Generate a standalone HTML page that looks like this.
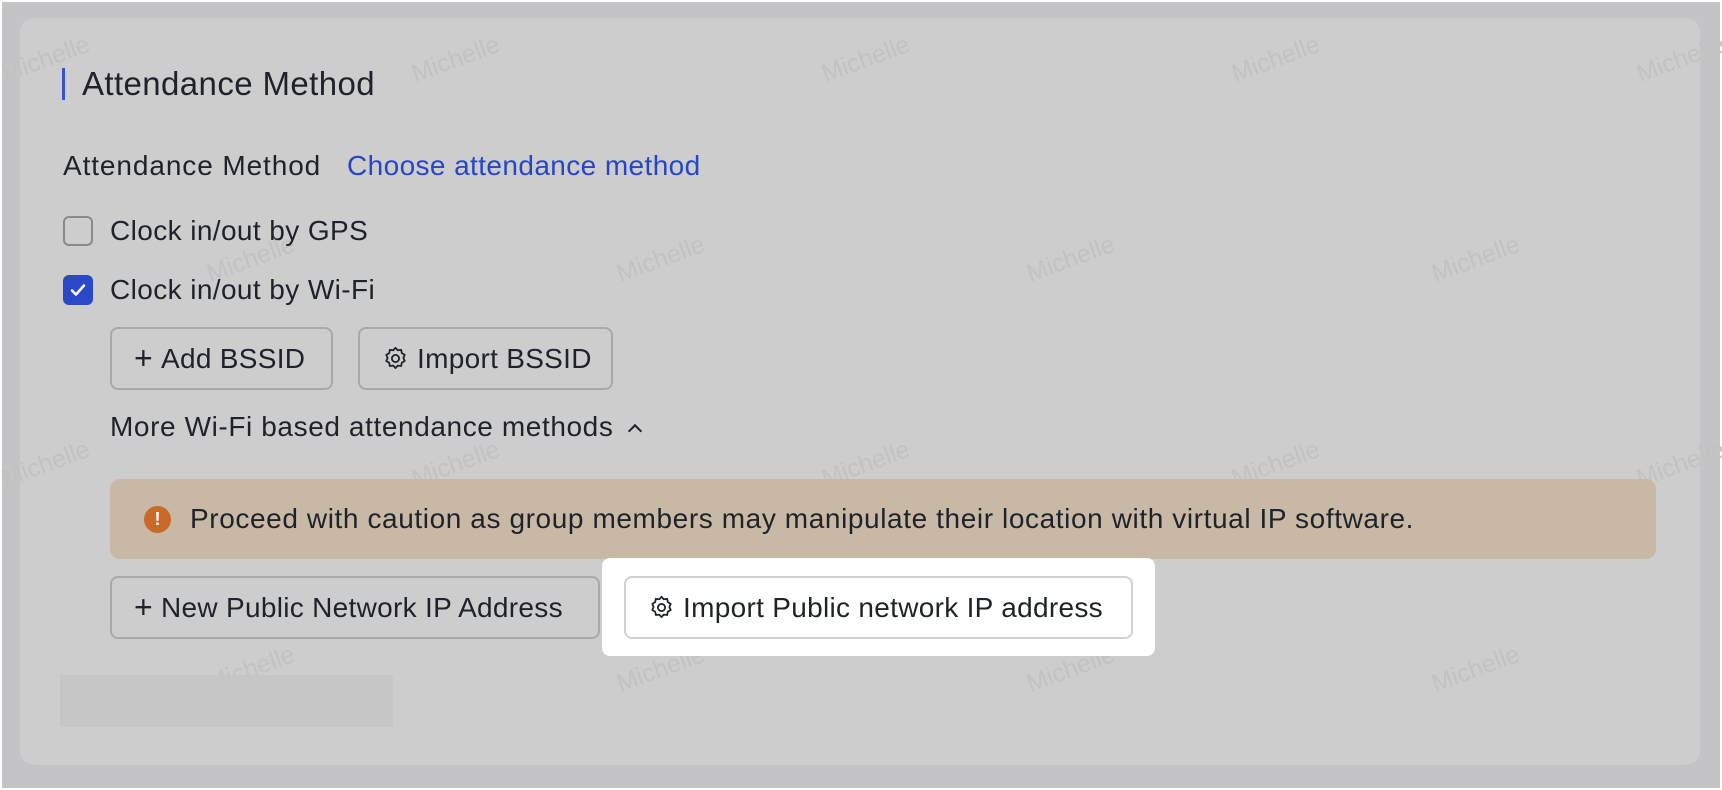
<!DOCTYPE html>
<html><head><meta charset="utf-8"><style>
*{box-sizing:border-box;margin:0;padding:0}
body{width:1722px;height:790px;background:#fff;font-family:"Liberation Sans",sans-serif;color:#1f2329;position:relative;overflow:hidden}
.frame{position:absolute;left:2px;top:2px;width:1718px;height:786px;background:#c4c4c6}
.panel{position:absolute;left:20px;top:18px;width:1680px;height:747px;background:#cdcdcd;border-radius:14px}
.abs{position:absolute}
.t{position:absolute;white-space:nowrap;font-size:28px;line-height:32px;letter-spacing:0.4px}
.btn{position:absolute;border:2px solid #a9a9ab;border-radius:8px;height:63px;font-size:28px;letter-spacing:0.3px;display:flex;align-items:center;padding-left:22px;white-space:nowrap}
.wm{position:absolute;color:#c2c2c2;font-size:25px;transform:rotate(-20deg);white-space:nowrap}
</style></head><body>
<div class="frame"></div>
<div class="panel"></div>
<div class="wm" style="left:0;top:45px">Michelle</div>
<div class="wm" style="left:410px;top:45px">Michelle</div>
<div class="wm" style="left:820px;top:45px">Michelle</div>
<div class="wm" style="left:1230px;top:45px">Michelle</div>
<div class="wm" style="left:1635px;top:45px">Michelle</div>
<div class="wm" style="left:205px;top:245px">Michelle</div>
<div class="wm" style="left:615px;top:245px">Michelle</div>
<div class="wm" style="left:1025px;top:245px">Michelle</div>
<div class="wm" style="left:1430px;top:245px">Michelle</div>
<div class="wm" style="left:0;top:450px">Michelle</div>
<div class="wm" style="left:410px;top:450px">Michelle</div>
<div class="wm" style="left:820px;top:450px">Michelle</div>
<div class="wm" style="left:1230px;top:450px">Michelle</div>
<div class="wm" style="left:1635px;top:450px">Michelle</div>
<div class="wm" style="left:205px;top:655px">Michelle</div>
<div class="wm" style="left:615px;top:655px">Michelle</div>
<div class="wm" style="left:1025px;top:655px">Michelle</div>
<div class="wm" style="left:1430px;top:655px">Michelle</div>

<div class="abs" style="left:62px;top:68px;width:3px;height:32px;background:#3355cc"></div>
<div class="t" style="left:82px;top:65px;font-size:33px;line-height:38px">Attendance Method</div>
<div class="t" style="left:63px;top:150px;letter-spacing:0.9px">Attendance Method</div>
<div class="t" style="left:347px;top:150px;color:#2646c8">Choose attendance method</div>

<div class="abs" style="left:63px;top:216px;width:30px;height:30px;border:2px solid #8a8a8e;border-radius:6px"></div>
<div class="t" style="left:110px;top:215px">Clock in/out by GPS</div>
<div class="abs" style="left:63px;top:275px;width:30px;height:30px;background:#2a48c8;border-radius:6px">
<svg width="30" height="30" viewBox="0 0 30 30"><path d="M9 15.5l4 4 8-9" fill="none" stroke="#fff" stroke-width="2.5" stroke-linecap="round" stroke-linejoin="round"/></svg></div>
<div class="t" style="left:110px;top:274px">Clock in/out by Wi-Fi</div>

<div class="btn" style="left:110px;top:327px;width:223px"><span style="font-size:32px;margin-right:8px;font-weight:300">+</span>Add BSSID</div>
<div class="btn" style="left:358px;top:327px;width:255px">
<svg width="27" height="27" viewBox="0 0 24 24" style="margin-right:8px"><path d="M12 2.5l2 2.2 3-.4.6 2.9 2.6 1.6-1.2 2.7 1.2 2.7-2.6 1.6-.6 2.9-3-.4-2 2.2-2-2.2-3 .4-.6-2.9-2.6-1.6 1.2-2.7-1.2-2.7 2.6-1.6.6-2.9 3 .4z" fill="none" stroke="#1f2329" stroke-width="1.6" stroke-linejoin="round"/><circle cx="12" cy="12" r="3.2" fill="none" stroke="#1f2329" stroke-width="1.6"/></svg>Import BSSID</div>

<div class="t" style="left:110px;top:411px;letter-spacing:0.6px">More Wi-Fi based attendance methods <span style="display:inline-block;width:10px;height:10px;border-left:2px solid #1f2329;border-top:2px solid #1f2329;transform:rotate(45deg);margin-left:8px;position:relative;top:0px"></span></div>

<div class="abs" style="left:110px;top:479px;width:1546px;height:80px;background:#c8b8a6;border-radius:10px"></div>
<div class="abs" style="left:144px;top:506px;width:27px;height:27px;border-radius:50%;background:#c9692a;color:#fff;font-size:18px;text-align:center;line-height:27px;font-weight:bold">!</div>
<div class="t" style="left:190px;top:503px;letter-spacing:0.6px">Proceed with caution as group members may manipulate their location with virtual IP software.</div>

<div class="btn" style="left:110px;top:576px;width:490px"><span style="font-size:32px;margin-right:8px;font-weight:300">+</span>New Public Network IP Address</div>
<div class="abs" style="left:602px;top:558px;width:553px;height:98px;background:#fff;border-radius:8px"></div>
<div class="btn" style="left:624px;top:576px;width:509px;border-color:#d0d0d4;background:#fff">
<svg width="27" height="27" viewBox="0 0 24 24" style="margin-right:8px"><path d="M12 2.5l2 2.2 3-.4.6 2.9 2.6 1.6-1.2 2.7 1.2 2.7-2.6 1.6-.6 2.9-3-.4-2 2.2-2-2.2-3 .4-.6-2.9-2.6-1.6 1.2-2.7-1.2-2.7 2.6-1.6.6-2.9 3 .4z" fill="none" stroke="#1f2329" stroke-width="1.6" stroke-linejoin="round"/><circle cx="12" cy="12" r="3.2" fill="none" stroke="#1f2329" stroke-width="1.6"/></svg>Import Public network IP address</div>

<div class="abs" style="left:60px;top:675px;width:333px;height:52px;background:#c6c6c6"></div>
</body></html>
